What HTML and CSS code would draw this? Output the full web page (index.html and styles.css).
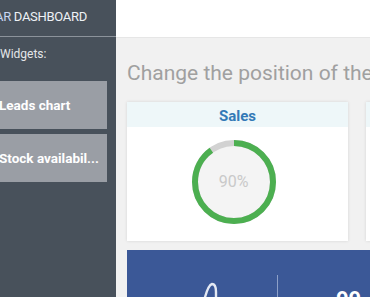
FILE: index.html
```html
<!DOCTYPE html>
<html lang="en">
<head>
    <meta charset="UTF-8">
    <title>Dashboard</title>
    <link rel="stylesheet" href="styles.css">
</head>
<body>
    <div class="app">
        <div class="sidebar">
            <div class="sidebar-head"><span class="brand">AR</span>&nbsp;DASHBOARD</div>
            <div class="sidebar-label">Widgets:</div>
            <div class="widget-list">
                <div class="widget-btn">Leads chart</div>
                <div class="widget-btn">Stock availabil...</div>
            </div>
        </div>
        <div class="main">
            <div class="topbar"></div>
            <div class="content">
                <h2 class="title">Change the position of the widgets</h2>
                <div class="cards">
                    <div class="card">
                        <div class="card-head">Sales</div>
                        <div class="card-body">
                            <div class="donut">
                                <svg width="84" height="84" viewBox="0 0 84 84">
                                    <circle cx="42" cy="42" r="39" fill="#f4f4f4" stroke="#d2d2d2" stroke-width="6"/>
                                    <circle cx="42" cy="42" r="39" fill="none" stroke="#4caf50" stroke-width="6"
                                        stroke-dasharray="220.5 245" transform="rotate(-90 42 42)"/>
                                </svg>
                                <span class="donut-value">90%</span>
                            </div>
                        </div>
                    </div>
                    <div class="card">
                        <div class="card-head">Leads</div>
                        <div class="card-body"></div>
                    </div>
                </div>
                <div class="stats">
                    <div class="stat">
                        <svg class="stat-icon" width="20" height="20" viewBox="0 0 20 20">
                            <path d="M3 19 Q7 3 11 2 Q15 2 15 10 L15 19" fill="none" stroke="#e4e9f3" stroke-width="2.4" stroke-linecap="round"/>
                        </svg>
                    </div>
                    <div class="stat stat-line">
                        <span class="stat-num">99</span>
                    </div>
                </div>
            </div>
        </div>
    </div>
</body>
</html>
```

FILE: styles.css
```css
html, body {
    height: 100%;
}
body {
    margin: 0;
    overflow: hidden;
    font-family: Roboto, "Liberation Sans", Arial, sans-serif;
}
.app {
    display: flex;
    width: 370px;
    height: 297px;
}
.sidebar {
    width: 116px;
    flex-shrink: 0;
    background-color: #48515b;
    overflow: hidden;
}
.sidebar-head {
    height: 37px;
    box-sizing: border-box;
    padding-bottom: 4px;
    border-bottom: 1px solid #8c939b;
    display: flex;
    align-items: center;
    margin-left: -5px;
    color: #eef2f6;
    font-size: 13px;
    letter-spacing: -0.3px;
    white-space: nowrap;
}
.brand {
    color: #c9d6f2;
}
.sidebar-label {
    margin: 10px 0 0 0;
    color: #e4e6e9;
    font-size: 12px;
}
.widget-list {
    margin: 20px 0 0 -16px;
}
.widget-btn {
    width: 123px;
    height: 48px;
    box-sizing: border-box;
    padding-left: 15px;
    margin-bottom: 5px;
    background-color: #9a9ea5;
    color: #ffffff;
    font-size: 13.5px;
    font-weight: bold;
    line-height: 48px;
    white-space: nowrap;
}
.main {
    flex: 1;
    display: flex;
    flex-direction: column;
    min-width: 0;
}
.topbar {
    height: 37px;
    flex-shrink: 0;
    background-color: #ffffff;
    border-bottom: 1px solid #e6e6e6;
}
.content {
    flex: 1;
    background-color: #f1f1f1;
    padding: 0 0 0 11px;
    overflow: hidden;
}
.title {
    margin: 23px 0 0 0;
    font-size: 21px;
    font-weight: normal;
    line-height: 24px;
    color: #a0a0a0;
    white-space: nowrap;
}
.cards {
    display: flex;
    gap: 18px;
    margin-top: 17px;
}
.card {
    width: 221px;
    height: 139px;
    flex-shrink: 0;
    background-color: #ffffff;
    box-shadow: 0 0 3px rgba(0, 0, 0, 0.12);
    display: flex;
    flex-direction: column;
}
.card-head {
    height: 25px;
    box-sizing: border-box;
    padding-top: 2px;
    line-height: 25px;
    background-color: #eef7f9;
    color: #337ab7;
    font-size: 15px;
    font-weight: bold;
    text-align: center;
}
.card-body {
    flex: 1;
    display: flex;
    align-items: center;
    justify-content: center;
}
.donut {
    position: relative;
    width: 84px;
    height: 84px;
    margin: 0 8px 4px 0;
}
.donut svg {
    display: block;
}
.donut-value {
    position: absolute;
    left: 0;
    right: 0;
    top: 0;
    line-height: 84px;
    text-align: center;
    color: #c9c9c9;
    font-size: 16px;
}
.stats {
    display: flex;
    margin-top: 9px;
    height: 60px;
    background-color: #3b5897;
    width: 300px;
}
.stat {
    width: 150px;
    flex-shrink: 0;
    display: flex;
    justify-content: center;
    align-items: flex-start;
    padding-top: 32px;
}
.stat-icon {
    margin-left: 18px;
}
.stat-line {
    border-left: 1px solid #8da0c8;
    margin-top: 25px;
    padding-top: 14px;
    justify-content: flex-start;
    padding-left: 58px;
}
.stat-num {
    color: #ffffff;
    font-size: 22px;
    font-weight: bold;
    line-height: 22px;
}
```
